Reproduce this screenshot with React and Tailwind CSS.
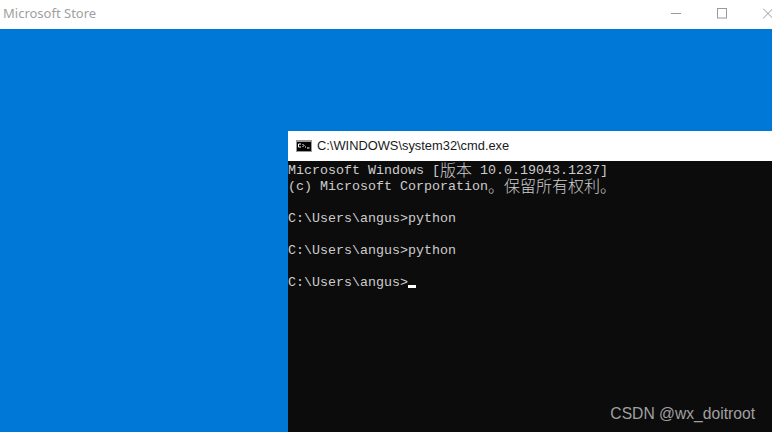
export default function App() {
  const mono = "font-['Liberation_Mono',monospace] text-[13.33px] leading-[16px] h-[16px] whitespace-pre text-[#cccccc]";
  const cjk = "inline-block h-[16px] align-top text-[16px] leading-[12px] font-['Noto_Sans_CJK_SC',sans-serif] font-light";
  return (
    <div className="w-[772px] h-[432px] overflow-hidden flex flex-col bg-[#0078d7] relative">
      <div className="h-[29px] bg-white flex items-start shrink-0">
        <span className="pl-[3px] flex-1 text-[13px] leading-[18px] mt-[4px] text-[#a0a0a0] font-['Noto_Sans',sans-serif]">Microsoft Store</span>
        <svg width="10" height="11" viewBox="0 0 10 11" className="mt-[8px] mr-[36px]" fill="none" stroke="#999" strokeWidth="1"><path d="M0 5.5H10" /></svg>
        <svg width="10" height="11" viewBox="0 0 10 11" className="mt-[8px] mr-[36px]" fill="none" stroke="#999" strokeWidth="1"><rect x="0.5" y="0.5" width="9" height="9.5" /></svg>
        <svg width="9" height="11" viewBox="0 0 9 11" className="mt-[8px]" fill="none" stroke="#999" strokeWidth="1"><path d="M0 0.5L10 10.5M0 10.5L10 0.5" /></svg>
      </div>
      <div className="flex-1 pl-[288px] pt-[102px] min-h-0">
        <div className="h-full flex flex-col">
          <div className="h-[30px] bg-white flex items-center pl-[8px] gap-[5px] shrink-0">
            <svg width="16" height="12" viewBox="0 0 16 12">
              <rect width="16" height="12" fill="#9a9a9a" />
              <rect x="1" y="2" width="14" height="9" fill="#000" />
              <path d="M2.5 4H5M2.5 4V7H5M6.5 4L8 5.5L6.5 7M9 7H10M11 8H13.5" stroke="#fff" fill="none" strokeWidth="1" />
            </svg>
            <span className="text-[12.87px] text-[#1a1a1a] font-['Liberation_Sans',sans-serif]">C:\WINDOWS\system32\cmd.exe</span>
          </div>
          <div className="flex-1 bg-[#0c0c0c] pt-[2px]">
            <div className={mono}>Microsoft Windows [<span className={cjk}>版本</span> 10.0.19043.1237]</div>
            <div className={mono}>(c) Microsoft Corporation<span className={cjk}>。保留所有权利。</span></div>
            <div className={mono}> </div>
            <div className={mono}>C:\Users\angus&gt;python</div>
            <div className={mono}> </div>
            <div className={mono}>C:\Users\angus&gt;python</div>
            <div className={mono}> </div>
            <div className={mono + " flex"}>
              <span>C:\Users\angus&gt;</span>
              <span className="w-[8px] h-[3px] bg-white mt-[10px]" />
            </div>
          </div>
        </div>
      </div>
      <div className="absolute right-[17px] bottom-[9px] text-[15.67px] leading-[18px] text-[#a0a0a0] font-['Liberation_Sans',sans-serif]">CSDN @wx_doitroot</div>
    </div>
  );
}
